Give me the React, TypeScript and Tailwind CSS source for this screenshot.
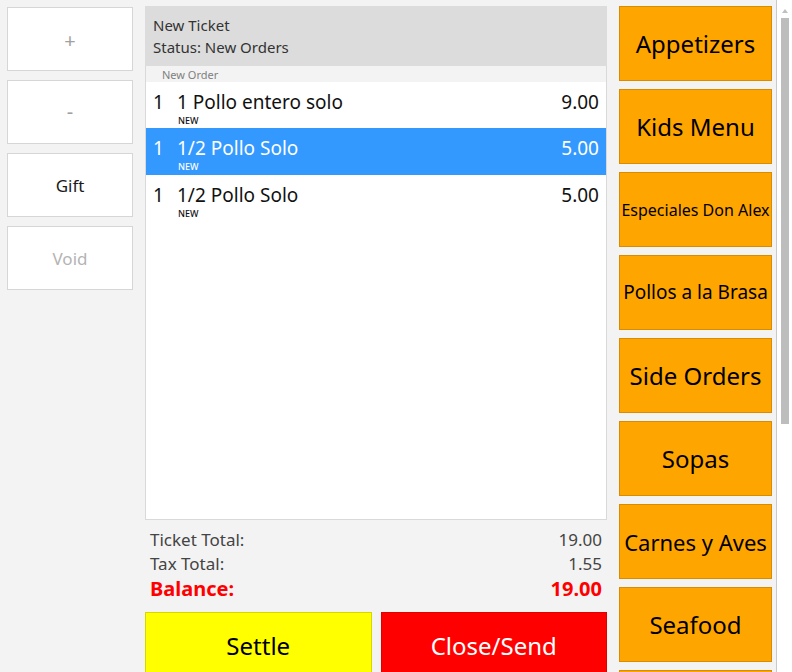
import React from 'react';

const font = { fontFamily: '"Segoe UI", "Noto Sans", "Open Sans", sans-serif' };

const sideButtons = [
  { label: '+', cls: 'text-[20px] text-[#a0a0a0] pt-[3px]' },
  { label: '-', cls: 'text-[20px] text-[#a0a0a0]' },
  { label: 'Gift', cls: 'text-[17px] text-[#1a1a1a]' },
  { label: 'Void', cls: 'text-[17px] text-[#b4b4b4]' },
];

const items = [
  { qty: '1', name: '1 Pollo entero solo', price: '9.00', selected: false },
  { qty: '1', name: '1/2 Pollo Solo', price: '5.00', selected: true },
  { qty: '1', name: '1/2 Pollo Solo', price: '5.00', selected: false },
];

const categories = [
  { label: 'Appetizers', cls: 'text-[24px]' },
  { label: 'Kids Menu', cls: 'text-[24px]' },
  { label: 'Especiales Don Alex', cls: 'text-[16px]' },
  { label: 'Pollos a la Brasa', cls: 'text-[19px]' },
  { label: 'Side Orders', cls: 'text-[24px]' },
  { label: 'Sopas', cls: 'text-[24px]' },
  { label: 'Carnes y Aves', cls: 'text-[22px]' },
  { label: 'Seafood', cls: 'text-[24px]' },
  { label: '', cls: 'text-[24px]' },
];

export default function App() {
  return (
    <div
      className="w-[792px] h-[672px] bg-[#f3f3f3] flex overflow-hidden leading-none"
      style={font}
    >
      {/* left action buttons */}
      <div className="w-[126px] ml-[7px] mt-[7px] flex flex-col gap-[9px] shrink-0">
        {sideButtons.map((b) => (
          <div
            key={b.label}
            className={`h-[64px] shrink-0 bg-white border border-[#d6d6d6] flex items-center justify-center ${b.cls}`}
          >
            {b.label}
          </div>
        ))}
      </div>

      {/* ticket */}
      <div className="w-[462px] ml-[12px] mt-[6px] flex flex-col shrink-0">
        <div className="h-[60px] shrink-0 bg-[#dcdcdc] px-[8px] pt-[11px] text-[15px] text-[#333] flex flex-col gap-[5px]">
          <span className="leading-[17px]">New Ticket</span>
          <span className="leading-[17px]">Status: New Orders</span>
        </div>
        <div className="h-[454px] shrink-0 bg-white border-x border-b border-[#d9d9d9] flex flex-col">
          <div className="h-[16px] shrink-0 bg-[#f3f3f3] pl-[16px] text-[11px] text-[#808080] flex items-center">
            New Order
          </div>
          {items.map((it, i) => (
            <div
              key={i}
              className={`${i === 1 ? 'h-[47px]' : 'h-[46px]'} shrink-0 px-[7px] ${
                it.selected ? 'bg-[#3399ff] text-white' : 'text-[#111]'
              }`}
            >
              <div className="flex items-center h-[28px] pt-[12px] text-[19px]">
                <span className="w-[24px]">{it.qty}</span>
                <span className="flex-1">{it.name}</span>
                <span>{it.price}</span>
              </div>
              <div className="pl-[25px] text-[9px] font-medium mt-[6px]">NEW</div>
            </div>
          ))}
        </div>
        <div className="px-[5px] pt-[7px] flex flex-col text-[#444] shrink-0">
          <div className="flex justify-between text-[17px] h-[24px] items-center">
            <span>Ticket Total:</span>
            <span>19.00</span>
          </div>
          <div className="flex justify-between text-[17px] h-[24px] items-center">
            <span>Tax Total:</span>
            <span>1.55</span>
          </div>
          <div className="flex justify-between text-[20px] font-bold text-[#ff0000] h-[28px] items-center">
            <span>Balance:</span>
            <span>19.00</span>
          </div>
        </div>
        <div className="mt-[9px] flex gap-[9px] shrink-0">
          <div className="flex-1 h-[68px] bg-[#ffff00] border border-[#d6d600] flex items-center justify-center text-[24px] text-black">
            Settle
          </div>
          <div className="flex-1 h-[68px] bg-[#ff0000] border border-[#e00000] flex items-center justify-center text-[24px] text-white">
            Close/Send
          </div>
        </div>
      </div>

      {/* categories */}
      <div className="w-[153px] ml-[12px] mt-[6px] flex flex-col gap-[8px] shrink-0">
        {categories.map((c, i) => (
          <div
            key={i}
            className={`h-[75px] shrink-0 bg-[#ffa500] border border-[#d98c00] flex items-center justify-center text-black whitespace-nowrap ${c.cls}`}
          >
            {c.label}
          </div>
        ))}
      </div>

      {/* scrollbar */}
      <div className="ml-[4px] w-[16px] h-full border-l border-[#c9c9c9] bg-white flex flex-col items-center shrink-0">
        <svg width="8" height="6" viewBox="0 0 8 6" className="mt-[8px]">
          <path d="M4 1 L7 5 L1 5 Z" fill="#c0c0c0" />
        </svg>
        <div className="w-[8px] h-[406px] bg-[#bdbdbd] mt-[4px]" />
      </div>
    </div>
  );
}
